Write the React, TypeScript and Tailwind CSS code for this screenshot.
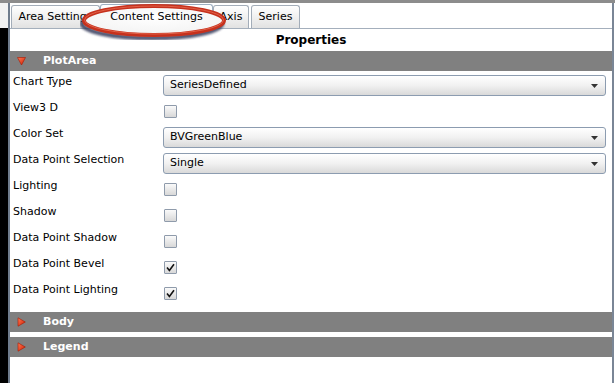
import React from "react";

type Row =
  | { label: string; kind: "select"; value: string }
  | { label: string; kind: "check"; checked: boolean };

const plotAreaRows: Row[] = [
  { label: "Chart Type", kind: "select", value: "SeriesDefined" },
  { label: "View3 D", kind: "check", checked: false },
  { label: "Color Set", kind: "select", value: "BVGreenBlue" },
  { label: "Data Point Selection", kind: "select", value: "Single" },
  { label: "Lighting", kind: "check", checked: false },
  { label: "Shadow", kind: "check", checked: false },
  { label: "Data Point Shadow", kind: "check", checked: false },
  { label: "Data Point Bevel", kind: "check", checked: true },
  { label: "Data Point Lighting", kind: "check", checked: true },
];

// little red arrow used in the section headers
function Arrow({ open }: { open?: boolean }) {
  return (
    <svg width="9" height="10" viewBox="0 0 9 10">
      <defs>
        <linearGradient id={open ? "arr-open" : "arr-closed"} x1="0" y1="0" x2="1" y2="1">
          <stop offset="0" stopColor="#ff7a55" />
          <stop offset="1" stopColor="#d01e00" />
        </linearGradient>
      </defs>
      {open ? (
        <polygon points="0.5,1.5 8.5,1.5 4.5,9" fill="url(#arr-open)" stroke="#a81800" strokeWidth="0.6" />
      ) : (
        <polygon points="1,0.8 8.3,5 1,9.2" fill="url(#arr-closed)" stroke="#a81800" strokeWidth="0.6" />
      )}
    </svg>
  );
}

function SectionHeader({ title, open }: { title: string; open?: boolean }) {
  return (
    <div className="h-[20px] bg-[#808080] flex items-center shrink-0">
      <div className="w-[33px] pl-[7px] flex items-center">
        <Arrow open={open} />
      </div>
      <span className="font-bold text-white text-[11px]">{title}</span>
    </div>
  );
}

function Select({ value }: { value: string }) {
  return (
    <div className="mt-[2px] h-[21px] flex-1 mr-[6px] rounded-[3px] border border-[#8c9cb0] bg-gradient-to-b from-white via-[#f1f1f1] to-[#d9d9d9] flex items-center pl-[6px] pr-[7px]">
      <span className="flex-1">{value}</span>
      <svg width="7" height="4" viewBox="0 0 7 4">
        <polygon points="0,0 7,0 3.5,4" fill="#333" />
      </svg>
    </div>
  );
}

function Check({ checked }: { checked: boolean }) {
  return (
    <div className="mt-[6px] ml-[1px] w-[13px] h-[13px] rounded-[1px] border border-[#8f9bab] bg-gradient-to-b from-[#fafafa] to-[#d8d8d8] flex items-center justify-center">
      {checked && (
        <svg width="9" height="9" viewBox="0 0 9 9">
          <path d="M1 4.6 L3.4 7.4 L8 1.2" fill="none" stroke="#111" strokeWidth="1.6" />
        </svg>
      )}
    </div>
  );
}

function Tab({ label, width, selected }: { label: string; width: number; selected?: boolean }) {
  const w =
    width === 89 ? "w-[89px]" : width === 113 ? "w-[113px]" : width === 36 ? "w-[36px]" : "w-[49px]";
  return (
    <div
      className={
        selected
          ? `${w} h-[25px] -mb-[1px] rounded-t-[3px] border border-b-0 border-[#9fb0c2] bg-white flex items-center justify-center`
          : `${w} h-[23px] rounded-t-[3px] border border-b-0 border-[#a3adb9] bg-gradient-to-b from-white to-[#e2e2e2] flex items-center justify-center`
      }
    >
      <span className={selected ? "relative z-20" : ""}>{label}</span>
    </div>
  );
}

export default function App() {
  return (
    <div className="relative w-[615px] h-[383px] overflow-hidden bg-white flex flex-col font-['DejaVu_Sans',sans-serif] text-[11px] text-black">
      <div className="h-[3px] bg-[#8c8c8c] shrink-0" />
      <div className="flex flex-1 min-h-0">
        {/* left edge */}
        <div className="w-[8px] flex flex-col">
          <div className="h-[25px] bg-[#f2f2f2]" />
          <div className="flex-1 bg-black" />
        </div>
        <div className="w-[2px] bg-[#6f7c8c]" />

        {/* panel */}
        <div className="flex-1 flex flex-col min-w-0">
          <div className="h-[26px] flex items-end pl-[1px] border-b border-[#a4afbc] shrink-0">
            <Tab label="Area Settings" width={89} />
            <Tab label="Content Settings" width={113} selected />
            <Tab label="Axis" width={36} />
            <div className="w-[2px]" />
            <Tab label="Series" width={49} />
          </div>

          <div className="h-[22px] flex items-center justify-center font-bold text-[12px] shrink-0">
            Properties
          </div>

          <SectionHeader title="PlotArea" open />
          <div className="mt-[2px] flex flex-col">
            {plotAreaRows.map((r) => (
              <div key={r.label} className="h-[26px] flex items-start">
                <div className="w-[153px] pl-[3px] pt-[2px] leading-[14px]">{r.label}</div>
                {r.kind === "select" ? <Select value={r.value} /> : <Check checked={r.checked} />}
              </div>
            ))}
          </div>

          <div className="mt-[5px]">
            <SectionHeader title="Body" />
          </div>
          <div className="mt-[5px]">
            <SectionHeader title="Legend" />
          </div>
        </div>

        <div className="w-[2px] bg-[#7a8696]" />
        <div className="w-[1px] bg-white" />
      </div>

      {/* red annotation ring round the selected tab */}
      <svg
        className="absolute left-[80px] top-0 z-10 pointer-events-none"
        width="150"
        height="40"
        viewBox="0 0 150 40"
      >
        <defs>
          <filter id="ring-blur" x="-10%" y="-30%" width="120%" height="160%">
            <feGaussianBlur stdDeviation="1" />
          </filter>
          <radialGradient id="ring-fill" cx="0.5" cy="0.4" r="0.6">
            <stop offset="0" stopColor="#ffffff" />
            <stop offset="1" stopColor="#f3f3f3" />
          </radialGradient>
        </defs>
        <ellipse cx="72" cy="23.5" rx="70" ry="14.5" fill="none" stroke="#353b5c" strokeWidth="4.5" opacity="0.85" filter="url(#ring-blur)" />
        <ellipse cx="74" cy="20.5" rx="70" ry="14.5" fill="url(#ring-fill)" stroke="#c6311d" strokeWidth="4" />
        <ellipse cx="74" cy="20" rx="69.5" ry="14" fill="none" stroke="#ef7c62" strokeWidth="0.8" opacity="0.8" />
      </svg>
    </div>
  );
}
